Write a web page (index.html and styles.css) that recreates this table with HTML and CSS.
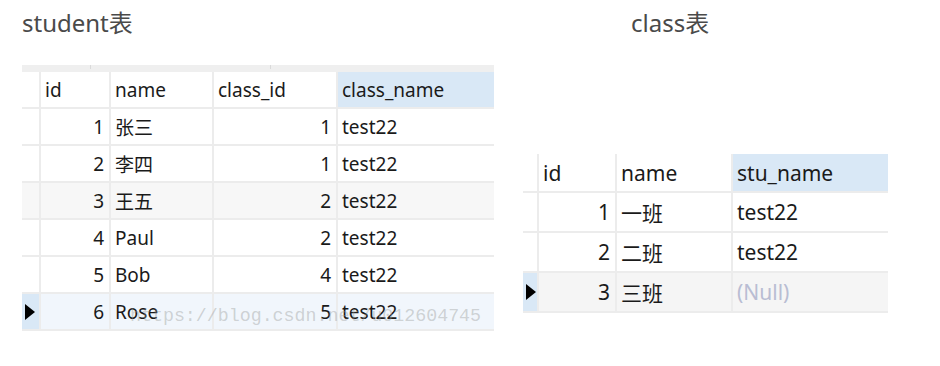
FILE: index.html
```html
<!DOCTYPE html>
<html lang="zh-CN">
<head>
<meta charset="utf-8">
<link rel="stylesheet" href="styles.css">
</head>
<body>
<div class="page">
  <section class="block block-student">
    <h2 class="title">student表</h2>
    <div class="grid-wrap">
      <div class="strip"><span class="tick t1"></span><span class="tick t2"></span></div>
      <table class="grid grid-student">
        <colgroup>
          <col class="c-ind-s"><col class="c-id-s"><col class="c-name-s"><col class="c-cid-s"><col class="c-cname-s">
        </colgroup>
        <thead>
          <tr><th class="ind"></th><th>id</th><th>name</th><th>class_id</th><th class="sel-col">class_name</th></tr>
        </thead>
        <tbody>
          <tr><td class="ind"></td><td class="num">1</td><td>张三</td><td class="num">1</td><td>test22</td></tr>
          <tr><td class="ind"></td><td class="num">2</td><td>李四</td><td class="num">1</td><td>test22</td></tr>
          <tr class="alt"><td class="ind"></td><td class="num">3</td><td>王五</td><td class="num">2</td><td>test22</td></tr>
          <tr><td class="ind"></td><td class="num">4</td><td>Paul</td><td class="num">2</td><td>test22</td></tr>
          <tr><td class="ind"></td><td class="num">5</td><td>Bob</td><td class="num">4</td><td>test22</td></tr>
          <tr class="cur"><td class="ind"><span class="arrow"></span></td><td class="num">6</td><td>Rose</td><td class="num">5</td><td>test22</td></tr>
        </tbody>
      </table>
      <div class="watermark">https://blog.csdn.net/u012604745</div>
    </div>
  </section>
  <section class="block block-class">
    <h2 class="title title-class">class表</h2>
    <table class="grid grid-class">
      <colgroup>
        <col class="c-ind-c"><col class="c-id-c"><col class="c-name-c"><col class="c-sname-c">
      </colgroup>
      <thead>
        <tr><th class="ind"></th><th>id</th><th>name</th><th class="sel-col">stu_name</th></tr>
      </thead>
      <tbody>
        <tr><td class="ind"></td><td class="num">1</td><td>一班</td><td>test22</td></tr>
        <tr><td class="ind"></td><td class="num">2</td><td>二班</td><td>test22</td></tr>
        <tr class="cur alt"><td class="ind"><span class="arrow"></span></td><td class="num">3</td><td>三班</td><td class="null">(Null)</td></tr>
      </tbody>
    </table>
  </section>
</div>
</body>
</html>
```
FILE: styles.css
```css
html, body {
  margin: 0;
  padding: 0;
  background: #ffffff;
}
body {
  width: 940px;
  height: 366px;
  overflow: hidden;
  font-family: "Noto Sans", "Noto Sans CJK SC", sans-serif;
  color: #1e1e1e;
}
.page {
  display: flex;
  align-items: flex-start;
  padding-left: 22px;
}
.block-student {
  width: 472px;
}
.block-class {
  margin-left: 29px;
  width: 365px;
}
.title {
  margin: 0;
  height: 48px;
  padding-top: 3px;
  font-size: 24px;
  line-height: 40px;
  font-weight: normal;
  color: #4a4a4a;
  font-family: "Noto Sans", "Noto Sans CJK SC", sans-serif;
}
.title-class {
  padding-left: 108px;
  margin-bottom: 103px;
}
.block-student .title {
  margin-bottom: 14px;
}
.grid-wrap {
  position: relative;
}
.strip {
  position: relative;
  height: 7px;
  background: #efefef;
}
.tick {
  position: absolute;
  top: 0;
  width: 1px;
  height: 4px;
  background: #dadada;
}
.t1 { left: 68px; }
.t2 { left: 248px; }
.grid {
  border-collapse: collapse;
  table-layout: fixed;
  font-size: 19px;
}
.grid-student { width: 472px; }
.grid-class { width: 365px; font-size: 21px; }
.c-ind-s { width: 18px; }
.c-id-s { width: 70px; }
.c-name-s { width: 103px; }
.c-cid-s { width: 124px; }
.c-cname-s { width: 157px; }
.c-ind-c { width: 15px; }
.c-id-c { width: 78px; }
.c-name-c { width: 116px; }
.c-sname-c { width: 156px; }
.grid th, .grid td {
  padding: 0 4px;
  text-align: left;
  font-weight: normal;
  white-space: nowrap;
  overflow: hidden;
  border-left: 2px solid #ececec;
  border-bottom: 2px solid #ececec;
  color: #1a1a1a;
}
.grid th.ind, .grid td.ind {
  border-left: none;
  padding: 0;
  position: relative;
}
.grid-student th { height: 35px; }
.grid-student td { height: 35px; }
.grid-class th { height: 37px; }
.grid-class td { height: 38px; }
.grid td.num {
  text-align: right;
  padding-right: 5px;
}
.grid .sel-col {
  background: #d9e8f6;
}
.grid tr.alt td {
  background: #f7f7f7;
}
.grid tr.cur td {
  background: #f1f6fc;
}
.grid-class tr.cur td {
  background: #f5f5f5;
}
.grid tr.cur td.ind {
  background: #d9e8f6;
}
.arrow {
  position: absolute;
  left: 3px;
  top: 50%;
  margin-top: -8px;
  width: 0;
  height: 0;
  border-top: 8px solid transparent;
  border-bottom: 8px solid transparent;
  border-left: 10px solid #000000;
}
.grid td.null {
  color: #b9bdd3;
}
.watermark {
  position: absolute;
  left: 108px;
  top: 241px;
  font-family: "Liberation Mono", "DejaVu Sans Mono", monospace;
  font-size: 18.3px;
  color: rgba(150, 150, 150, 0.4);
  pointer-events: none;
  white-space: nowrap;
}
```
